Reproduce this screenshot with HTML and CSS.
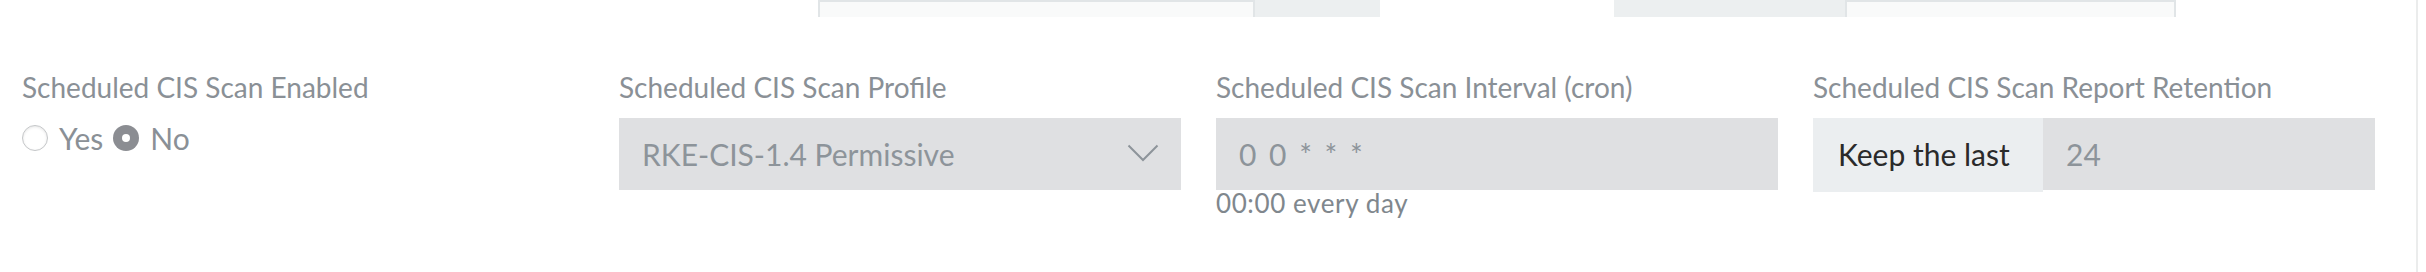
FILE: index.html
```html
<!DOCTYPE html>
<html>
<head>
<meta charset="utf-8">
<link rel="stylesheet" href="styles.css">
</head>
<body>
<div class="page">
  <div class="top-row">
    <div class="top-cell"></div>
    <div class="top-cell">
      <div class="top-group">
        <div class="top-input top-input-1"></div>
        <div class="top-addon top-addon-1"></div>
      </div>
    </div>
    <div class="top-cell">
      <div class="top-group">
        <div class="top-addon top-addon-2"></div>
        <div class="top-input top-input-2"></div>
      </div>
    </div>
  </div>

  <div class="fields">
    <div class="field">
      <div class="label">Scheduled CIS Scan Enabled</div>
      <div class="radios">
        <span class="radio"></span><span class="radio-text">Yes</span>
        <span class="radio checked"></span><span class="radio-text">No</span>
      </div>
    </div>

    <div class="field">
      <div class="label">Scheduled CIS Scan Profile</div>
      <div class="box select">
        <span class="value">RKE-CIS-1.4 Permissive</span>
        <svg class="chevron" width="32" height="18" viewBox="0 0 32 18"><polyline points="1.5,1.5 16,16 30.5,1.5" fill="none" stroke="#8d949a" stroke-width="2"/></svg>
      </div>
    </div>

    <div class="field">
      <div class="label">Scheduled CIS Scan Interval (cron)</div>
      <div class="box">
        <span class="value cron">0 0 * * *</span>
      </div>
      <div class="help">00:00 every day</div>
    </div>

    <div class="field">
      <div class="label">Scheduled CIS Scan Report Retention</div>
      <div class="input-group">
        <div class="addon">Keep the last</div>
        <div class="box grow"><span class="value">24</span></div>
      </div>
    </div>
  </div>
</div>
</body>
</html>
```

FILE: styles.css
```css
html, body {
  margin: 0;
  padding: 0;
  background: #ffffff;
}

body {
  font-family: "Lato", "Liberation Sans", sans-serif;
}

.page {
  width: 2416px;
  height: 272px;
  border-right: 2px solid #ebecec;
  box-sizing: content-box;
}

.top-row {
  display: grid;
  grid-template-columns: 562px 562px 562px;
  column-gap: 234px;
  padding-left: 22px;
  height: 17px;
  overflow: hidden;
  align-items: end;
}

.top-group {
  display: flex;
  height: 60px;
}

.top-input {
  background: #f9fafa;
  border: 2px solid #e1e5e7;
  box-sizing: border-box;
}

.top-addon {
  background: #eceff0;
}

.top-input-1 { width: 437px; }
.top-addon-1 { width: 125px; }
.top-addon-2 { width: 231px; }
.top-input-2 { width: 331px; }

.fields {
  display: grid;
  grid-template-columns: repeat(4, 562px);
  column-gap: 35px;
  padding-left: 22px;
  padding-top: 52px;
}

.field {
  display: flex;
  flex-direction: column;
}

.label {
  font-size: 28px;
  line-height: 36px;
  color: #8a9096;
  margin-bottom: 13px;
  white-space: nowrap;
}

.radios {
  display: flex;
  align-items: center;
  height: 40px;
}

.radio {
  width: 26px;
  height: 26px;
  border-radius: 50%;
  border: 1px solid #c4c6c8;
  background: #ffffff;
  box-shadow: inset 0 1px 3px rgba(0,0,0,0.1);
  box-sizing: border-box;
  margin-right: 11px;
  position: relative;
  flex: none;
}

.radio.checked {
  border: none;
  background: #8b8d92;
  box-shadow: none;
}

.radio.checked::after {
  content: "";
  position: absolute;
  left: 9px;
  top: 9px;
  width: 8px;
  height: 8px;
  border-radius: 50%;
  background: #ffffff;
}

.radio-text {
  font-size: 30px;
  color: #8a9096;
  margin-right: 10px;
}

.box {
  height: 72px;
  background: #dfe0e2;
  display: flex;
  align-items: center;
  padding: 0 22px 0 23px;
  box-sizing: border-box;
}

.select {
  justify-content: space-between;
}

.value {
  font-size: 30px;
  color: #8d949a;
  white-space: nowrap;
}

.cron {
  word-spacing: 5px;
}

.chevron {
  display: block;
  margin-top: -2px;
}

.help {
  font-size: 26px;
  line-height: 24px;
  letter-spacing: 0.6px;
  color: #80878d;
  margin-top: 1px;
}

.input-group {
  display: flex;
  align-items: flex-start;
}

.addon {
  width: 230px;
  height: 74px;
  background: #ebeef0;
  display: flex;
  align-items: center;
  padding-left: 25px;
  padding-bottom: 2px;
  box-sizing: border-box;
  font-size: 30px;
  color: #2a2a2a;
  white-space: nowrap;
}

.grow {
  flex: 1;
}
```
